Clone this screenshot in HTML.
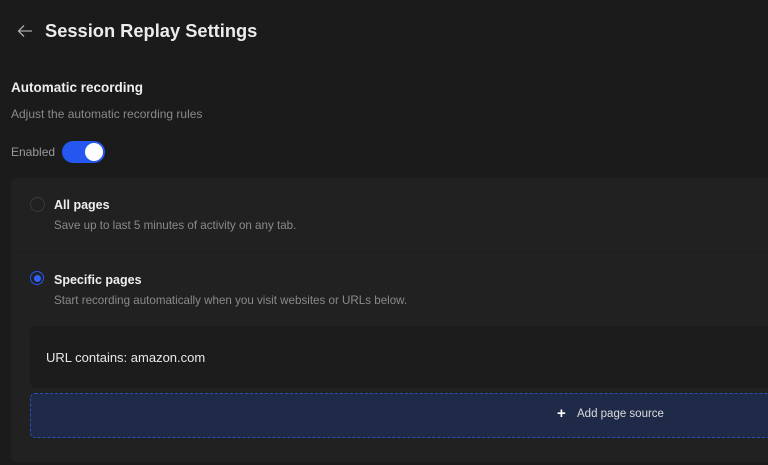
<!DOCTYPE html>
<html><head><style>
body{margin:0;width:768px;height:465px;background:#1b1b1b;font-family:"Liberation Sans",sans-serif;overflow:hidden;position:relative;color:#eee}
.a{position:absolute}
</style></head><body>
<svg class="a" style="left:17px;top:24px" width="16" height="14" viewBox="0 0 16 14"><path d="M15 7H2M7 1.5L1.5 7 7 12.5" stroke="#aaa" stroke-width="1.3" fill="none"/></svg>
<div class="a" style="left:45px;top:20px;font-size:18.3px;font-weight:bold;color:#ececec">Session Replay Settings</div>
<div class="a" style="left:11px;top:80px;font-size:13.5px;font-weight:bold;color:#eee">Automatic recording</div>
<div class="a" style="left:11px;top:107px;font-size:12px;color:#8a8a8a">Adjust the automatic recording rules</div>
<div class="a" style="left:11px;top:145px;font-size:12px;color:#9a9a9a">Enabled</div>
<div class="a" style="left:62px;top:141px;width:43px;height:22px;border-radius:11px;background:#2457f0"></div>
<div class="a" style="left:85px;top:143px;width:18px;height:18px;border-radius:50%;background:#fff"></div>
<div class="a" style="left:11px;top:178px;width:770px;height:284px;background:#212121;border-radius:6px"></div>
<div class="a" style="left:11px;top:252px;width:770px;height:1px;background:#1d1d1d"></div>
<div class="a" style="left:30px;top:197px;width:13px;height:13px;border-radius:50%;border:1.5px solid #3a3a3a"></div>
<div class="a" style="left:54px;top:198px;font-size:12.5px;font-weight:bold;color:#eee">All pages</div>
<div class="a" style="left:54px;top:219px;font-size:11.6px;color:#8a8a8a">Save up to last 5 minutes of activity on any tab.</div>
<div class="a" style="left:30px;top:271px;width:12px;height:12px;border-radius:50%;border:1.5px solid #2457f0"></div>
<div class="a" style="left:34px;top:275px;width:7px;height:7px;border-radius:50%;background:#2f62ff"></div>
<div class="a" style="left:54px;top:273px;font-size:12.5px;font-weight:bold;color:#eee">Specific pages</div>
<div class="a" style="left:54px;top:294px;font-size:11.6px;color:#8a8a8a">Start recording automatically when you visit websites or URLs below.</div>
<div class="a" style="left:30px;top:326px;width:760px;height:62px;background:#1c1c1c;border-radius:6px"></div>
<div class="a" style="left:46px;top:350px;font-size:13px;color:#e8e8e8">URL contains: amazon.com</div>
<div class="a" style="left:30px;top:393px;width:760px;height:43px;background:#1f2a48;border:1px dashed #2d4fb0;border-radius:5px"></div>
<div class="a" style="left:557px;top:405px;font-size:15px;font-weight:bold;color:#fff">+</div>
<div class="a" style="left:577px;top:408px;font-size:11.5px;color:#ddd">Add page source</div>
</body></html>
